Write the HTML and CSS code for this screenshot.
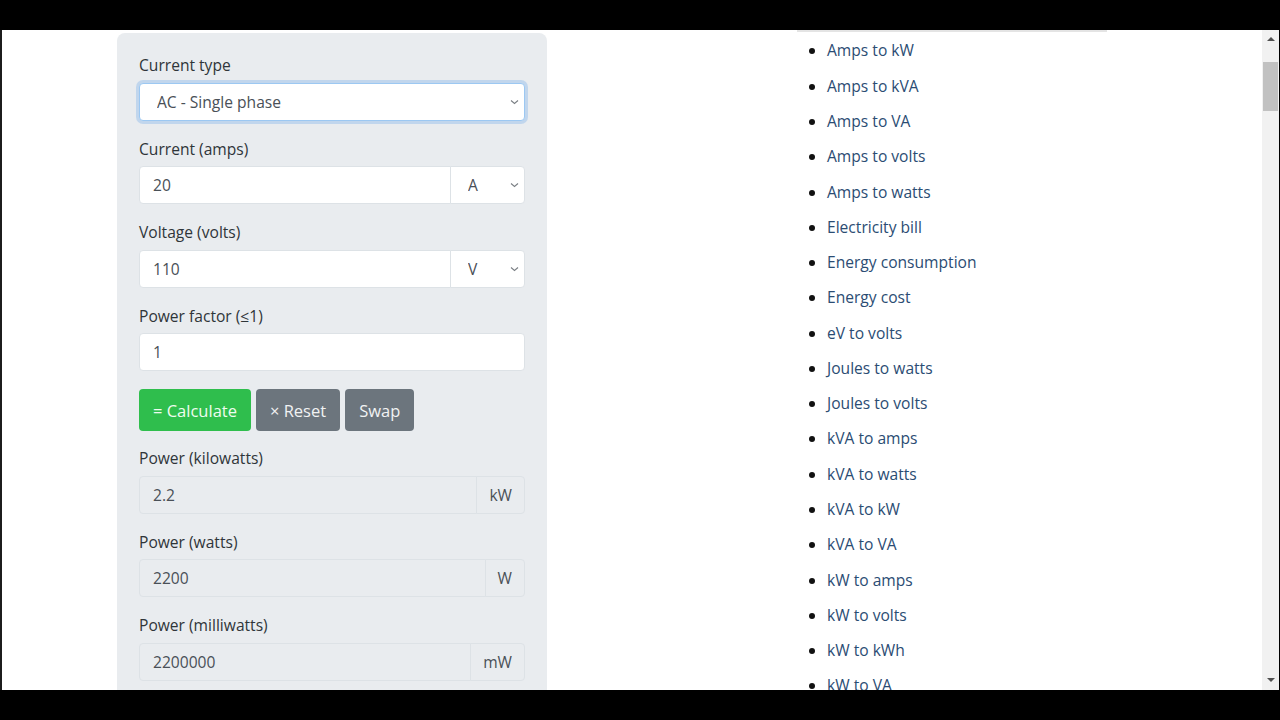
FILE: index.html
```html
<!DOCTYPE html>
<html lang="en">
<head>
  <meta charset="UTF-8" />
  <title>Power calculator</title>
  <link rel="stylesheet" href="styles.css">
</head>
<body>
  <div class="screen">
    <div class="page">
      <form class="calc">
        <div class="group">
          <label>Current type</label>
          <div class="select-wrap focused">
            <select class="field">
              <option>AC - Single phase</option>
            </select>
            <svg class="chev" width="9" height="6" viewBox="0 0 9 6"><path d="M1 1.5l3.5 3 3.5-3" fill="none" stroke="#7a7f84" stroke-width="1.1"/></svg>
          </div>
        </div>
        <div class="group">
          <label>Current (amps)</label>
          <div class="input-group">
            <input class="field" type="text" value="20">
            <div class="select-wrap unit">
              <select class="field"><option>A</option></select>
              <svg class="chev" width="9" height="6" viewBox="0 0 9 6"><path d="M1 1.5l3.5 3 3.5-3" fill="none" stroke="#7a7f84" stroke-width="1.1"/></svg>
            </div>
          </div>
        </div>
        <div class="group">
          <label>Voltage (volts)</label>
          <div class="input-group">
            <input class="field" type="text" value="110">
            <div class="select-wrap unit">
              <select class="field"><option>V</option></select>
              <svg class="chev" width="9" height="6" viewBox="0 0 9 6"><path d="M1 1.5l3.5 3 3.5-3" fill="none" stroke="#7a7f84" stroke-width="1.1"/></svg>
            </div>
          </div>
        </div>
        <div class="group">
          <label>Power factor (≤1)</label>
          <input class="field" type="text" value="1">
        </div>
        <div class="buttons">
          <button type="button" class="btn btn-green">= Calculate</button>
          <button type="button" class="btn btn-gray">&times; Reset</button>
          <button type="button" class="btn btn-gray">Swap</button>
        </div>
        <div class="group">
          <label>Power (kilowatts)</label>
          <div class="input-group">
            <input class="field" type="text" value="2.2" readonly>
            <span class="addon">kW</span>
          </div>
        </div>
        <div class="group">
          <label>Power (watts)</label>
          <div class="input-group">
            <input class="field" type="text" value="2200" readonly>
            <span class="addon">W</span>
          </div>
        </div>
        <div class="group">
          <label>Power (milliwatts)</label>
          <div class="input-group">
            <input class="field" type="text" value="2200000" readonly>
            <span class="addon">mW</span>
          </div>
        </div>
      </form>

      <div class="links">
        <div class="links-top"></div>
        <ul>
          <li><a href="#">Amps to kW</a></li>
          <li><a href="#">Amps to kVA</a></li>
          <li><a href="#">Amps to VA</a></li>
          <li><a href="#">Amps to volts</a></li>
          <li><a href="#">Amps to watts</a></li>
          <li><a href="#">Electricity bill</a></li>
          <li><a href="#">Energy consumption</a></li>
          <li><a href="#">Energy cost</a></li>
          <li><a href="#">eV to volts</a></li>
          <li><a href="#">Joules to watts</a></li>
          <li><a href="#">Joules to volts</a></li>
          <li><a href="#">kVA to amps</a></li>
          <li><a href="#">kVA to watts</a></li>
          <li><a href="#">kVA to kW</a></li>
          <li><a href="#">kVA to VA</a></li>
          <li><a href="#">kW to amps</a></li>
          <li><a href="#">kW to volts</a></li>
          <li><a href="#">kW to kWh</a></li>
          <li><a href="#">kW to VA</a></li>
        </ul>
      </div>
    </div>

    <div class="scrollbar">
      <span class="arrow up"></span>
      <div class="thumb"></div>
      <span class="arrow down"></span>
    </div>
  </div>
</body>
</html>
```

FILE: styles.css
```css
body {
  margin: 0;
  background: #000;
  height: 720px;
  overflow: hidden;
  font-family: "Open Sans", "Noto Sans", sans-serif;
  font-size: 15.6px;
  color: #343a40;
}
.screen {
  margin-top: 30px;
  height: 660px;
  display: flex;
  background: #fff;
  border-left: 2px solid #1c1c1c;
  overflow: hidden;
}
.page {
  flex: 1;
  display: flex;
  align-items: flex-start;
  padding-left: 115px;
  overflow: hidden;
}

/* calculator panel */
.calc {
  width: 430px;
  box-sizing: border-box;
  margin-top: 3px;
  padding: 20px 22px 30px;
  background: #e9ecef;
  border-radius: 8px;
  flex-shrink: 0;
}
.group {
  margin-bottom: 16px;
}
.group label {
  display: block;
  line-height: 24px;
  margin-bottom: 5.5px;
  color: #2f3539;
}
.field {
  display: block;
  width: 100%;
  height: 38px;
  box-sizing: border-box;
  padding: 0 13px;
  font-family: inherit;
  font-size: 15.6px;
  color: #495057;
  background: #fff;
  border: 1px solid #dde2e6;
  border-radius: 4px;
  outline: none;
}
.field[readonly] {
  background: #e9ecef;
}
.select-wrap {
  position: relative;
}
.select-wrap select {
  appearance: none;
  -webkit-appearance: none;
  padding-left: 17px;
}
.select-wrap .chev {
  position: absolute;
  right: 6px;
  top: 16px;
  pointer-events: none;
}
.select-wrap.focused select {
  border-color: #9cc8f2;
  box-shadow: 0 0 0 3px rgba(120, 175, 235, 0.35);
}
.input-group {
  display: flex;
}
.input-group > .field {
  flex: 1;
  min-width: 0;
  border-radius: 4px 0 0 4px;
}
.input-group .unit {
  width: 75px;
  margin-left: -1px;
  flex-shrink: 0;
}
.input-group .unit select {
  border-radius: 0 4px 4px 0;
}
.addon {
  display: flex;
  align-items: center;
  padding: 0 12px;
  margin-left: -1px;
  background: #e9ecef;
  border: 1px solid #dde2e6;
  border-radius: 0 4px 4px 0;
  color: #495057;
}

.buttons {
  display: flex;
  gap: 5px;
  margin: 18px 0 15px;
}
.btn {
  height: 42px;
  padding: 0 14px;
  font-family: inherit;
  font-size: 16.5px;
  border: none;
  border-radius: 4px;
  color: #fff;
  cursor: pointer;
}
.btn-green {
  background: #2fbe4d;
  color: #eefcef;
}
.btn-gray {
  background: #6c757d;
  color: #f1f2f3;
}

/* related links */
.links {
  margin-left: 250px;
  width: 310px;
  flex-shrink: 0;
}
.links-top {
  height: 2px;
  background: #e4e4e4;
}
.links ul {
  margin: 0;
  padding: 1.4px 0 0 30px;
  color: #111;
}
.links li {
  line-height: 35.28px;
}
.links a {
  color: #2b4c73;
  text-decoration: none;
}

/* fake scrollbar */
.scrollbar {
  width: 17px;
  flex-shrink: 0;
  background: #f1f1f1;
  border-right: 1px solid #000;
  display: flex;
  flex-direction: column;
  align-items: center;
}
.arrow {
  width: 0;
  height: 0;
  border-left: 4px solid transparent;
  border-right: 4px solid transparent;
}
.arrow.up {
  margin-top: 7px;
  border-bottom: 4px solid #505050;
}
.arrow.down {
  margin-top: auto;
  margin-bottom: 8px;
  border-top: 4px solid #505050;
}
.thumb {
  width: 15px;
  height: 49px;
  margin-top: 21px;
  background: #c1c1c1;
}
```
